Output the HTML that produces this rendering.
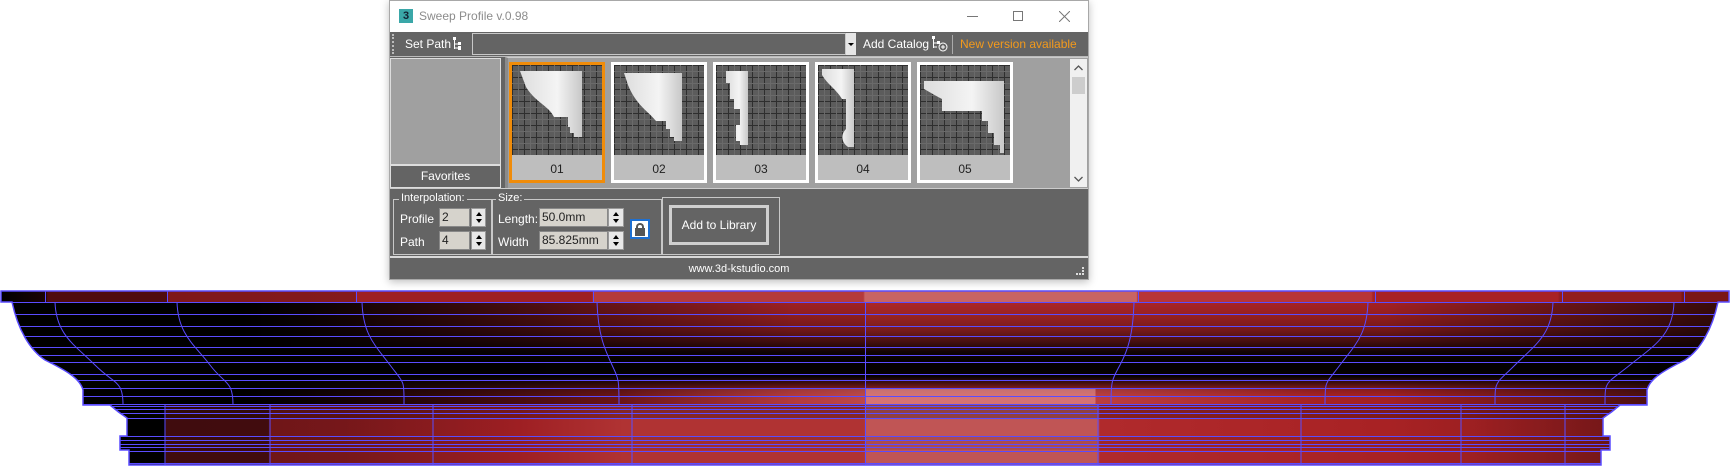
<!DOCTYPE html>
<html><head><meta charset="utf-8"><style>
*{margin:0;padding:0;box-sizing:border-box}
body{width:1732px;height:466px;background:#fff;position:relative;overflow:hidden;font-family:"Liberation Sans",sans-serif}
.a{position:absolute}
.dlg{left:389px;top:0;width:700px;height:280px;background:#646464;border:1px solid #a8a8a8;box-shadow:0 2px 8px rgba(0,0,0,.25)}
.t{color:#fff;font-size:12px;white-space:nowrap}
.inp{background:#d6d3cc;border:1px solid #888;font-size:12px;color:#222;padding:1px 2px;line-height:15px}
.spin{background:#e8e8e8;border:1px solid #999}
.spin:before,.spin:after{content:"";position:absolute;left:4px;border-left:3px solid transparent;border-right:3px solid transparent}
.spin:before{top:3px;border-bottom:4px solid #000}
.spin:after{bottom:3px;border-top:4px solid #000}
.gb{border:1px solid #c8c8c8}
.thumb{width:96px;height:121px;border:3px solid #fff;background:#bebebe}
.thumb .lb{position:absolute;left:0;right:0;bottom:4px;text-align:center;font-size:12px;color:#222}
.hg{background:linear-gradient(to right,#000 0%,#1a0304 2.6%,#4f0c0f 2.7%,#4f0c0f 9.6%,#7e171a 9.7%,#841a1d 20.5%,#9e1f23 20.6%,#9e1f23 34.2%,#b43a3c 34.3%,#b43a3c 49.9%,#c86464 50%,#c86464 65.7%,#b83536 65.8%,#b83536 79.3%,#a82224 79.4%,#a82224 90.1%,#921d1f 90.2%,#921d1f 97.2%,#7a1616 97.3%)}
.clip{clip-path:path('M1 291H1729V302H1718C1712 330 1700 350 1685 360C1665 370 1650 378 1647 390V405H1620C1612 412 1606 416 1603 418V436H1610V450H1601V465H129V450H120V436H127V418C124 416 118 412 110 405H83V390C80 378 65 370 45 360C30 350 18 330 12 302H1Z')}
#body{left:0;top:0;width:1732px;height:466px;
background:
linear-gradient(to bottom,rgba(0,0,0,0) 302px,rgba(0,0,0,.1) 315px,rgba(0,0,0,.3) 330px,rgba(0,0,0,.6) 342px,rgba(0,0,0,.9) 352px,rgba(0,0,0,.97) 360px,rgba(0,0,0,.97) 376px,rgba(0,0,0,.6) 383px,rgba(0,0,0,.15) 390px,rgba(0,0,0,0) 396px),
linear-gradient(to right,rgba(0,0,0,1) 0%,rgba(0,0,0,1) 14%,rgba(0,0,0,.75) 22%,rgba(0,0,0,.4) 33%,rgba(0,0,0,0) 46%,rgba(0,0,0,0) 80%,rgba(0,0,0,.5) 100%),
linear-gradient(to right,#000 0%,#4f0c0f 12%,#7e171a 22%,#9a1e22 34%,#a02224 49.9%,#ac2828 50%,#aa2527 65%,#a42123 80%,#8a1c1e 92%,#6a1414 100%)}
#low{left:0;top:405px;width:1732px;height:61px;
background:
linear-gradient(to bottom,rgba(0,0,0,.25) 0px,rgba(0,0,0,.25) 13px,rgba(0,0,0,0) 13px,rgba(0,0,0,0) 31px,rgba(0,0,0,.1) 31px,rgba(0,0,0,.1) 45px,rgba(0,0,0,0) 45px),
linear-gradient(to right,rgba(0,0,0,1) 0%,rgba(0,0,0,1) 9.5%,rgba(0,0,0,.5) 9.6%,rgba(0,0,0,.5) 15.5%,rgba(0,0,0,.15) 15.6%,rgba(0,0,0,0) 30%,rgba(0,0,0,0) 85%,rgba(0,0,0,.3) 100%),
linear-gradient(to right,#7e171a 0%,#841a1d 20%,#9e1f23 30%,#b03333 36%,#b03333 49.9%,#c05555 50%,#c05555 63.4%,#b02a2c 63.5%,#a82224 80%,#921d1f 90%,#7a1616 100%)}
</style></head><body>

<div class="a dlg">
 <div class="a" style="left:0;top:0;width:698px;height:31px;background:#fff"></div>
 <div class="a" style="left:9px;top:8px;width:14px;height:14px;background:#3aa7a8;color:#123;font-size:11px;font-weight:bold;text-align:center;line-height:14px">3</div>
 <div class="a" style="left:29px;top:8px;font-size:12px;color:#8c8c8c">Sweep Profile v.0.98</div>
 <div class="a" style="left:577px;top:15px;width:11px;height:1px;background:#777"></div>
 <div class="a" style="left:623px;top:10px;width:10px;height:10px;border:1px solid #777"></div>
 <svg class="a" style="left:669px;top:10px" width="11" height="11"><path d="M0 0L11 11M11 0L0 11" stroke="#777"/></svg>

 <div class="a" style="left:2px;top:33px;width:2px;height:20px;border-left:2px dotted #bbb"></div>
 <div class="a t" style="left:15px;top:36px">Set Path</div>
 <svg class="a" style="left:63px;top:36px" width="10" height="14"><rect x="0" y="0" width="3" height="3" fill="#fff"/><path d="M1.5 3V12M1.5 7H5M1.5 11H5" stroke="#fff"/><rect x="5" y="5" width="3" height="3" fill="#fff"/><rect x="5" y="9" width="3" height="4" fill="#fff"/></svg>
 <div class="a" style="left:82px;top:32px;width:374px;height:22px;border:1px solid #c8c8c8;background:#646464"></div>
 <div class="a" style="left:456px;top:32px;width:10px;height:22px;background:#e6e6e6"><div class="a" style="left:2px;top:10px;border-left:3px solid transparent;border-right:3px solid transparent;border-top:3px solid #000"></div></div>
 <div class="a t" style="left:473px;top:36px">Add Catalog</div>
 <svg class="a" style="left:542px;top:35px" width="16" height="16"><rect x="0" y="0" width="3" height="3" fill="#fff"/><path d="M1.5 3V12M1.5 7H5M1.5 11H5" stroke="#fff"/><rect x="5" y="5" width="3" height="3" fill="#fff"/><circle cx="11" cy="11" r="4" fill="none" stroke="#fff"/><path d="M9 11H13M11 9V13" stroke="#fff"/></svg>
 <div class="a" style="left:562px;top:34px;width:1px;height:19px;background:#aaa"></div>
 <div class="a" style="left:570px;top:36px;font-size:12px;color:#f39a1c">New version available</div>

 <div class="a" style="left:0;top:55px;width:698px;height:1px;background:#bbb"></div>
 <div class="a" style="left:0;top:57px;width:111px;height:107px;background:#a0a0a0;border:1px solid #ddd"></div>
 <div class="a" style="left:0;top:164px;width:111px;height:23px;border:1px solid #ddd;background:#646464;text-align:center;font-size:12px;color:#fff;line-height:21px">Favorites</div>
 <div class="a" style="left:115px;top:56px;width:583px;height:131px;background:#a0a0a0;border-left:3px solid #8a8a8a;border-top:1px solid #ccc"></div>
 <div class="a" style="left:680px;top:58px;width:17px;height:128px;background:#f0f0f0"></div>
 <div class="a" style="left:682px;top:76px;width:13px;height:17px;background:#cdcdcd"></div>
 <svg class="a" style="left:684px;top:64px" width="9" height="6"><path d="M0.5 5L4.5 1L8.5 5" stroke="#555" fill="none" stroke-width="1.3"/></svg>
 <svg class="a" style="left:684px;top:175px" width="9" height="6"><path d="M0.5 1L4.5 5L8.5 1" stroke="#555" fill="none" stroke-width="1.3"/></svg>

 <div class="a" style="left:0;top:187px;width:698px;height:1px;background:#ccc"></div>
 <div class="a gb" style="left:3px;top:198px;width:99px;height:56px"></div>
 <div class="a" style="left:9px;top:191px;background:#646464;padding:0 2px;font-size:11px;color:#fff">Interpolation:</div>
 <div class="a gb" style="left:102px;top:198px;width:170px;height:56px"></div>
 <div class="a" style="left:106px;top:191px;background:#646464;padding:0 2px;font-size:11px;color:#fff">Size:</div>
 <div class="a gb" style="left:272px;top:196px;width:118px;height:58px"></div>
 <div class="a t" style="left:10px;top:211px">Profile</div>
 <div class="a t" style="left:10px;top:234px">Path</div>
 <div class="a inp" style="left:49px;top:207px;width:31px;height:19px">2</div>
 <div class="a spin" style="left:81px;top:207px;width:15px;height:19px"></div>
 <div class="a inp" style="left:49px;top:230px;width:31px;height:19px">4</div>
 <div class="a spin" style="left:81px;top:230px;width:15px;height:19px"></div>
 <div class="a t" style="left:108px;top:211px">Length:</div>
 <div class="a t" style="left:108px;top:234px">Width</div>
 <div class="a inp" style="left:149px;top:207px;width:69px;height:19px">50.0mm</div>
 <div class="a spin" style="left:218px;top:207px;width:16px;height:19px"></div>
 <div class="a inp" style="left:149px;top:230px;width:69px;height:19px">85.825mm</div>
 <div class="a spin" style="left:218px;top:230px;width:16px;height:19px"></div>
 <div class="a" style="left:240px;top:218px;width:20px;height:20px;border:2px solid #1e6fd0;background:#fff"><div class="a" style="left:3px;top:7px;width:10px;height:8px;background:#555"></div><div class="a" style="left:4px;top:2px;width:8px;height:8px;border:2px solid #555;border-bottom:none;border-radius:4px 4px 0 0"></div></div>
 <div class="a" style="left:279px;top:204px;width:100px;height:40px;border:3px solid #d0d0d0;text-align:center;line-height:34px;font-size:12px;color:#fff">Add to Library</div>
 <div class="a" style="left:0;top:255px;width:698px;height:2px;background:#d8d8d8"></div>
 <div class="a" style="left:0;top:262px;width:698px;text-align:center;font-size:11px;color:#fff">www.3d-kstudio.com</div>
 <div class="a" style="left:686px;top:266px;width:8px;height:8px;border-right:2px dotted #ddd;border-bottom:2px dotted #ddd"></div>
</div>

<svg width="0" height="0" style="position:absolute"><defs>
 <pattern id="grid" width="12" height="12" patternUnits="userSpaceOnUse"><rect width="12" height="12" fill="#5c5c5c"/><path d="M0 0.5H12M0.5 0V12" stroke="#2e2e2e"/><path d="M0 6.5H12M6.5 0V12" stroke="#6a6a6a"/></pattern>
 <linearGradient id="wh" x1="0" x2="1"><stop offset="0" stop-color="#ddd"/><stop offset=".6" stop-color="#f4f4f4"/><stop offset="1" stop-color="#c8c8c8"/></linearGradient>
</defs></svg>
<div class="a thumb" style="left:509px;top:62px;border-color:#f08c0a"><svg class="a" style="left:0;top:0" width="90" height="90"><rect width="90" height="90" fill="url(#grid)"/><path d="M8 6H70V72H62V68H58V62H56V52H42C36 40 24 38 14 22Z" fill="url(#wh)"/></svg><div class="lb">01</div></div>
<div class="a thumb" style="left:611px;top:62px"><svg class="a" style="left:0;top:0" width="90" height="90"><rect width="90" height="90" fill="url(#grid)"/><path d="M10 8H68V76H60V72H56V64H52V56H42C34 46 22 40 14 20Z" fill="url(#wh)"/></svg><div class="lb">02</div></div>
<div class="a thumb" style="left:713px;top:62px"><svg class="a" style="left:0;top:0" width="90" height="90"><rect width="90" height="90" fill="url(#grid)"/><path d="M10 6H32V80H24V76H20V60H24V44H18V34H14V18H10Z" fill="url(#wh)"/></svg><div class="lb">03</div></div>
<div class="a thumb" style="left:815px;top:62px"><svg class="a" style="left:0;top:0" width="90" height="90"><rect width="90" height="90" fill="url(#grid)"/><path d="M4 4H36V82H30C24 78 22 70 28 64V34H24C18 24 10 20 4 10Z" fill="url(#wh)"/></svg><div class="lb">04</div></div>
<div class="a thumb" style="left:917px;top:62px"><svg class="a" style="left:0;top:0" width="90" height="90"><rect width="90" height="90" fill="url(#grid)"/><path d="M4 16H84V88H80V80H74V68H68V56H62V46H22V34C14 30 8 26 4 24Z" fill="url(#wh)"/></svg><div class="lb">05</div></div>

<div class="a clip" id="body"></div>
<div class="a" style="left:0;top:0;width:1732px;height:466px;overflow:hidden"><div class="a clip" style="left:0;top:0;width:1732px;height:466px"><div class="a" id="low"></div></div></div>
<div class="a" style="left:620px;top:389px;width:1000px;height:16px;background:linear-gradient(to right,rgba(255,140,140,0) 0%,rgba(255,150,150,.25) 20%,rgba(255,160,160,.3) 24.5%,rgba(255,190,190,.5) 24.6%,rgba(255,190,190,.5) 47.5%,rgba(255,160,160,.2) 47.6%,rgba(255,140,140,0) 70%)"></div>
<div class="a hg" style="left:1px;top:291px;width:1728px;height:11px"></div>

<svg class="a" style="left:0;top:0" width="1732" height="466">
 <defs>
  <clipPath id="cp"><path id="shape" d="M1 291H1729V302H1718C1712 330 1700 350 1685 360C1665 370 1650 378 1647 390V405H1620C1612 412 1606 416 1603 418V436H1610V450H1601V465H129V450H120V436H127V418C124 416 118 412 110 405H83V390C80 378 65 370 45 360C30 350 18 330 12 302H1Z"/></clipPath>
 </defs>
 <g clip-path="url(#cp)" stroke="#5a4cff" stroke-width="1" fill="none">
   <path d="M0 302.5H1732M0 314.5H1732M0 326.5H1732M0 336.5H1732M0 347.5H1732M0 355.5H1732M0 362.5H1732M0 374.5H1732M0 380.5H1732M0 388.5H1732M0 396.5H1732M0 404.5H1732M0 406.5H1732M0 409.5H1732M0 413.5H1732M0 418.5H1732M0 436.5H1732M0 440.5H1732M0 444.5H1732M0 447.5H1732M0 451.5H1732M0 463.5H1732"/>
   <path d="M45.5 291V302M167.5 291V302M356.5 291V302M593.5 291V302M1138.5 291V302M1375.5 291V302M1562.5 291V302M1684.5 291V302"/>
   <path d="M55 302C56 335 75 345 95 365S123 380 123 405"/>
   <path d="M177 302C178 335 195 345 210 365S233 380 233 405"/>
   <path d="M362 302C363 335 375 345 390 365S404 380 404 405"/>
   <path d="M597 302C598 335 605 350 612 365S619 380 619 405"/>
   <path d="M865.5 302V465"/>
   <path d="M1134 302C1133 335 1128 350 1120 365S1111 380 1111 405"/>
   <path d="M1368 302C1367 335 1355 345 1340 365S1325 380 1325 405"/>
   <path d="M1553 302C1552 335 1535 345 1515 365S1495 380 1495 405"/>
   <path d="M1674 302C1673 335 1655 345 1630 365S1605 380 1605 405"/>
   <path d="M165 405V465M270 405V465M433 405V465M632 405V465M1098 405V465M1301 405V465M1461 405V465M1565 405V465"/>
 </g>
 <use href="#shape" fill="none" stroke="#5a4cff" stroke-width="1.5"/>
</svg>
</body></html>
